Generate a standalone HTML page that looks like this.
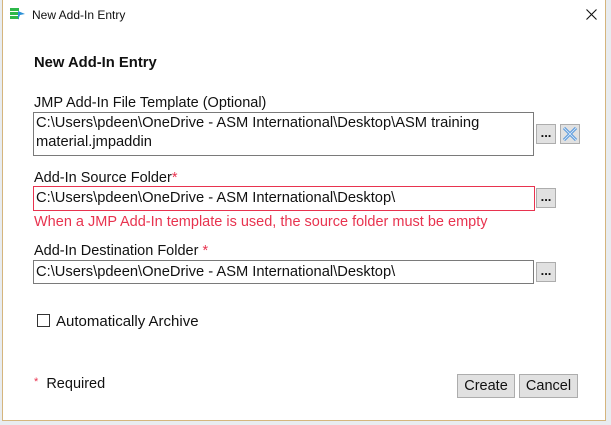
<!DOCTYPE html>
<html><head><meta charset="utf-8"><style>
html,body{margin:0;padding:0;width:611px;height:425px;overflow:hidden;background:#e8ecf0;}
*{box-sizing:border-box;}
body{font-family:"Liberation Sans",sans-serif;font-size:14.5px;color:#111;position:relative;}
.win{position:absolute;left:2px;top:0;width:604px;height:421px;background:#fff;border:1px solid #d5b57d;border-top:none;}
.a{position:absolute;white-space:nowrap;}
.tb{position:absolute;border:1px solid #7a7a7a;background:#fff;padding:1px 2px;line-height:20px;font-size:14.7px;white-space:nowrap;}
.btn{position:absolute;background:#e1e1e1;border:1px solid #adadad;text-align:center;}
.dots{width:20px;height:20px;font-size:13px;line-height:16px;font-weight:bold;}
</style></head><body>
<div class="win"></div>
<svg class="a" style="left:10px;top:7px" width="16" height="14" viewBox="0 0 16 14">
<rect x="0" y="1" width="9" height="3" fill="#2db84a"/><rect x="0" y="5" width="9" height="3" fill="#2db84a"/><rect x="0" y="9" width="9" height="3" fill="#2db84a"/>
<path d="M8 4 L15 7 L10 8 L8 13 Z" fill="#2a8fd6"/></svg>
<div class="a" style="left:32px;top:8px;font-size:12px;">New Add-In Entry</div>
<svg class="a" style="left:586px;top:9px" width="11" height="11"><path d="M0.5 0.5 L10.5 10.5 M10.5 0.5 L0.5 10.5" stroke="#111" stroke-width="1.1"/></svg>
<div class="a" style="left:34px;top:55px;font-weight:bold;font-size:14.8px;">New Add-In Entry</div>
<div class="a" style="left:34px;top:95px;">JMP Add-In File Template (Optional)</div>
<div class="tb" style="left:33px;top:112px;width:501px;height:44px;line-height:19px;padding-top:1px;">C:\Users\pdeen\OneDrive - ASM International\Desktop\ASM training<br>material.jmpaddin</div>
<div class="btn dots" style="left:536px;top:124px;">...</div>
<div class="btn" style="left:560px;top:124px;width:20px;height:20px;"><svg width="18" height="18" viewBox="0 0 18 18"><path d="M3 3 L15 15 M15 3 L3 15" stroke="#4a90d9" stroke-width="3"/><path d="M3 3 L15 15 M15 3 L3 15" stroke="#cfe4f8" stroke-width="1.2"/></svg></div>
<div class="a" style="left:34px;top:170px;">Add-In Source Folder<span style="color:#e8334f">*</span></div>
<div class="tb" style="left:33px;top:186px;width:502px;height:25px;border:1px solid #e8334f;">C:\Users\pdeen\OneDrive - ASM International\Desktop\</div>
<div class="btn dots" style="left:536px;top:188px;">...</div>
<div class="a" style="left:34px;top:214px;color:#e8334f;">When a JMP Add-In template is used, the source folder must be empty</div>
<div class="a" style="left:34px;top:243px;">Add-In Destination Folder<span style="color:#e8334f"> *</span></div>
<div class="tb" style="left:33px;top:260px;width:501px;height:24px;">C:\Users\pdeen\OneDrive - ASM International\Desktop\</div>
<div class="btn dots" style="left:536px;top:262px;">...</div>
<div class="a" style="left:37px;top:314px;width:13px;height:13px;border:1px solid #333;"></div>
<div class="a" style="left:56px;top:313px;font-size:15px;">Automatically Archive</div>
<div class="a" style="left:34px;top:376px;"><span style="color:#e8334f;font-size:11px;vertical-align:top">*</span>&nbsp; Required</div>
<div class="btn" style="left:457px;top:374px;width:58px;height:24px;line-height:22px;">Create</div>
<div class="btn" style="left:519px;top:374px;width:59px;height:24px;line-height:22px;">Cancel</div>
</body></html>
